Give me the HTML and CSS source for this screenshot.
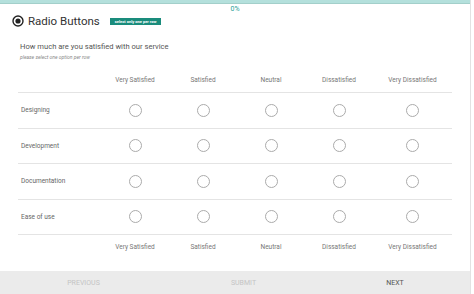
FILE: index.html
```html
<!DOCTYPE html>
<html>
<head>
<meta charset="utf-8">
<link rel="stylesheet" href="styles.css">
</head>
<body>
<div class="page">
  <div class="progress"></div>
  <div class="pct">0%</div>
  <div class="header">
    <svg class="icon" width="12" height="12" viewBox="0 0 12 12"><circle cx="6" cy="6" r="5" fill="none" stroke="#222" stroke-width="1.4"/><circle cx="6" cy="6" r="2.6" fill="#222"/></svg>
    <span class="title">Radio Buttons</span>
    <span class="badge">select only one per row</span>
  </div>
  <div class="question">How much are you satisfied with our service</div>
  <div class="sub">please select one option per row</div>
  <div class="matrix">
    <div class="row head">
      <div class="label"></div>
      <div class="col">Very Satisfied</div>
      <div class="col">Satisfied</div>
      <div class="col">Neutral</div>
      <div class="col">Dissatisfied</div>
      <div class="col">Very Dissatisfied</div>
    </div>
    <div class="row body">
      <div class="label">Designing</div>
      <div class="col"><span class="radio"></span></div>
      <div class="col"><span class="radio"></span></div>
      <div class="col"><span class="radio"></span></div>
      <div class="col"><span class="radio"></span></div>
      <div class="col"><span class="radio"></span></div>
    </div>
    <div class="row body">
      <div class="label">Development</div>
      <div class="col"><span class="radio"></span></div>
      <div class="col"><span class="radio"></span></div>
      <div class="col"><span class="radio"></span></div>
      <div class="col"><span class="radio"></span></div>
      <div class="col"><span class="radio"></span></div>
    </div>
    <div class="row body">
      <div class="label">Documentation</div>
      <div class="col"><span class="radio"></span></div>
      <div class="col"><span class="radio"></span></div>
      <div class="col"><span class="radio"></span></div>
      <div class="col"><span class="radio"></span></div>
      <div class="col"><span class="radio"></span></div>
    </div>
    <div class="row body">
      <div class="label">Ease of use</div>
      <div class="col"><span class="radio"></span></div>
      <div class="col"><span class="radio"></span></div>
      <div class="col"><span class="radio"></span></div>
      <div class="col"><span class="radio"></span></div>
      <div class="col"><span class="radio"></span></div>
    </div>
    <div class="row foot">
      <div class="label"></div>
      <div class="col">Very Satisfied</div>
      <div class="col">Satisfied</div>
      <div class="col">Neutral</div>
      <div class="col">Dissatisfied</div>
      <div class="col">Very Dissatisfied</div>
    </div>
  </div>
  <div class="footer">
    <span class="btn disabled">PREVIOUS</span>
    <span class="btn disabled">SUBMIT</span>
    <span class="btn">NEXT</span>
  </div>
</div>
</body>
</html>
```

FILE: styles.css
```css
html, body {
  margin: 0;
  padding: 0;
  background: #fff;
}
body {
  font-family: Roboto, "Liberation Sans", sans-serif;
  color: #666;
}
.page {
  width: 471px;
  height: 294px;
  border-right: 1px solid #e2e2e2;
  display: flex;
  flex-direction: column;
  box-sizing: border-box;
}
.progress {
  height: 3px;
  background: #b4e0dc;
  border-bottom: 1px solid #a3cfca;
}
.pct {
  height: 9px;
  line-height: 9px;
  font-size: 7px;
  color: #2aa198;
  text-align: center;
  margin-top: 1px;
}
.header {
  height: 14px;
  display: flex;
  align-items: center;
  padding-left: 12px;
}
.icon {
  display: block;
}
.title {
  font-size: 11.5px;
  color: #333;
  margin-left: 4px;
  line-height: 14px;
}
.badge {
  margin-left: 10px;
  background: #1a8c7c;
  color: #fff;
  font-size: 4px;
  line-height: 7px;
  height: 7px;
  padding: 0 5px;
  font-weight: bold;
}
.question {
  margin-top: 13px;
  padding-left: 20px;
  font-size: 7.6px;
  line-height: 12px;
  color: #555;
}
.sub {
  padding-left: 20px;
  font-size: 5px;
  line-height: 8px;
  font-style: italic;
  color: #888;
}
.matrix {
  margin: 0 18px;
  display: flex;
  flex-direction: column;
}
.row {
  display: grid;
  grid-template-columns: 83px 68px 68px 68px 68px 1fr;
  font-size: 6.5px;
  line-height: 8px;
  color: #777;
}
.row.head {
  height: 32px;
  align-items: end;
  padding-bottom: 8px;
  box-sizing: border-box;
  border-bottom: 1px solid #e4e4e4;
}
.row.body {
  height: 35.5px;
  align-items: center;
  border-bottom: 1px solid #e4e4e4;
  box-sizing: border-box;
}
.row.foot {
  padding-top: 8px;
}
.label {
  padding-left: 3px;
  color: #666;
}
.col {
  text-align: center;
  display: flex;
  justify-content: center;
}
.radio {
  display: block;
  width: 11px;
  height: 11px;
  border: 1px solid #ababab;
  border-radius: 50%;
}
.footer {
  margin-top: auto;
  height: 23px;
  background: #ebebeb;
  display: grid;
  grid-template-columns: 167px 153px 1fr;
  align-items: center;
  font-size: 7px;
}
.btn {
  text-align: center;
  color: #555;
}
.btn.disabled {
  color: #c4c4c4;
}
```
